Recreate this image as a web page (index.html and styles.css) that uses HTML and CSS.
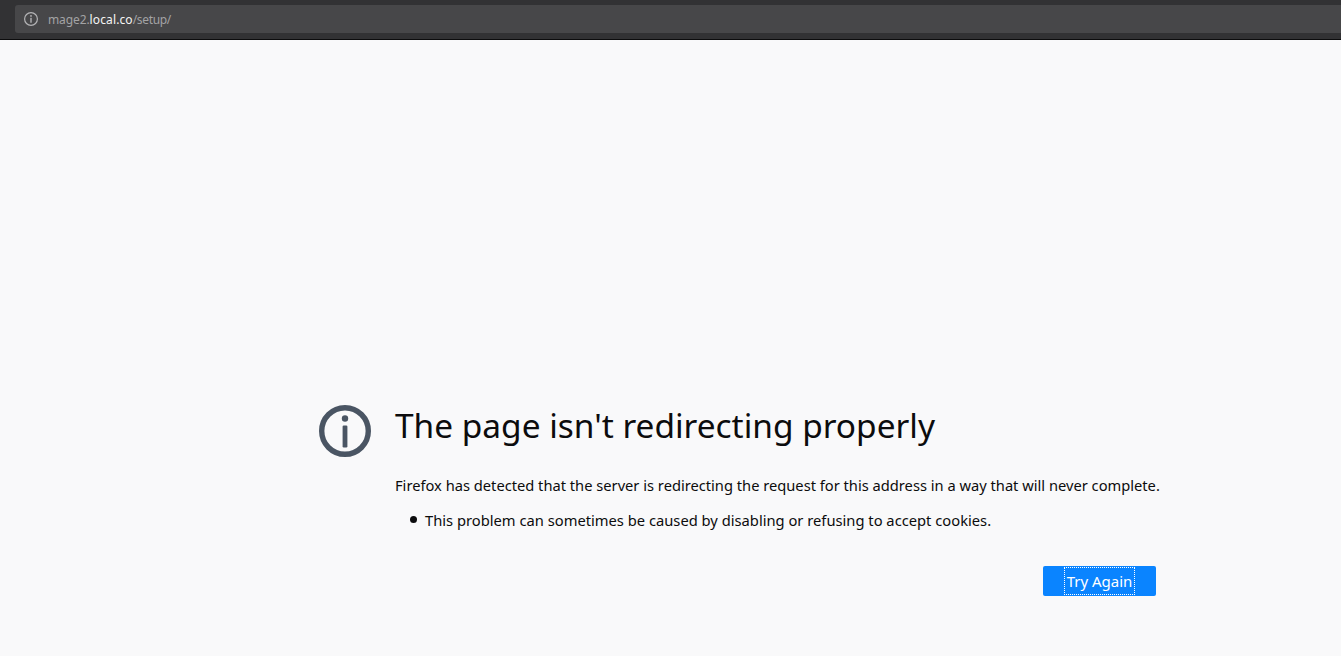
FILE: index.html
```html
<!DOCTYPE html>
<html lang="en">
<head>
<meta charset="utf-8">
<title>Problem loading page</title>
<link rel="stylesheet" href="styles.css">
</head>
<body>
<header class="toolbar">
  <div class="urlbar">
    <svg class="url-icon" viewBox="0 0 16 16" width="16" height="16" aria-hidden="true">
      <circle cx="8" cy="8" r="6.4" fill="none" stroke="#b4b4b6" stroke-width="1.2"/>
      <circle cx="8" cy="4.9" r="0.9" fill="#b4b4b6"/>
      <rect x="7.3" y="6.8" width="1.4" height="5" rx="0.3" fill="#b4b4b6"/>
    </svg>
    <span class="url"><span class="url-dim">mage2.</span><span class="url-host">local.co</span><span class="url-path">/setup/</span></span>
  </div>
</header>
<main class="page">
  <div class="error">
    <svg class="error-icon" viewBox="0 0 52 52" width="52" height="52" aria-hidden="true">
      <circle cx="26" cy="26" r="23.3" fill="none" stroke="#4a5563" stroke-width="5.4"/>
      <circle cx="26" cy="13.5" r="3.2" fill="#4a5563"/>
      <rect x="23.6" y="20.5" width="4.8" height="22" rx="1.2" fill="#4a5563"/>
    </svg>
    <div class="error-body">
      <h1 class="title">The page isn't redirecting properly</h1>
      <p class="desc">Firefox has detected that the server is redirecting the request for this address in a way that will never complete.</p>
      <ul class="list">
        <li class="item">This problem can sometimes be caused by disabling or refusing to accept cookies.</li>
      </ul>
      <div class="actions">
        <button class="retry" type="button"><span class="retry-label">Try Again</span></button>
      </div>
    </div>
  </div>
</main>
</body>
</html>
```
FILE: styles.css
```css
* { box-sizing: border-box; }
html, body { margin: 0; padding: 0; height: 100%; }
body {
  display: flex;
  flex-direction: column;
  height: 656px;
  overflow: hidden;
  background: #f9f9fa;
  font-family: "Noto Sans", sans-serif;
  color: #0c0c0d;
}
.toolbar {
  flex: none;
  height: 40px;
  padding: 5px 0 6px 15px;
  background: #323234;
  border-bottom: 1px solid #0c0c0d;
}
.urlbar {
  display: flex;
  align-items: center;
  height: 28px;
  padding-left: 8px;
  background: #474749;
  border-radius: 3px 0 0 3px;
}
.url-icon { flex: none; margin-right: 9px; }
.url { font-size: 12px; }
.url-dim { color: #a3a3a5; letter-spacing: -0.1px; }
.url-host { color: #f5f5f5; letter-spacing: 0.12px; }
.url-path { color: #a3a3a5; letter-spacing: -0.35px; }
.page {
  flex: 1;
  padding: 365px 0 0 319px;
}
.error { display: flex; align-items: flex-start; }
.error-icon { flex: none; margin-right: 24px; }
.error-body { width: 761px; }
.title {
  margin: 0;
  font-size: 33.44px;
  font-weight: 400;
  line-height: 40px;
  white-space: nowrap;
}
.desc {
  margin: 30px 0 0;
  font-size: 14.68px;
  line-height: 20px;
  white-space: nowrap;
}
.list {
  margin: 15px 0 0;
  padding: 0 0 0 30px;
  list-style: none;
  font-size: 14.72px;
  line-height: 20px;
  white-space: nowrap;
}
.item { position: relative; }
.item::before {
  content: "";
  position: absolute;
  left: -15px;
  top: 6px;
  width: 7px;
  height: 7px;
  border-radius: 50%;
  background: #0c0c0d;
}
.actions {
  display: flex;
  justify-content: flex-end;
  margin-top: 36px;
}
.retry {
  display: flex;
  align-items: center;
  justify-content: center;
  width: 113px;
  height: 30px;
  padding: 0;
  border: 0;
  border-radius: 2px;
  background: #0a84ff;
  color: #fff;
  font-family: inherit;
  font-size: 15px;
}
.retry-label {
  display: block;
  padding: 0 1.5px;
  line-height: 26px;
  outline: 1px dotted #fff;
}
```
